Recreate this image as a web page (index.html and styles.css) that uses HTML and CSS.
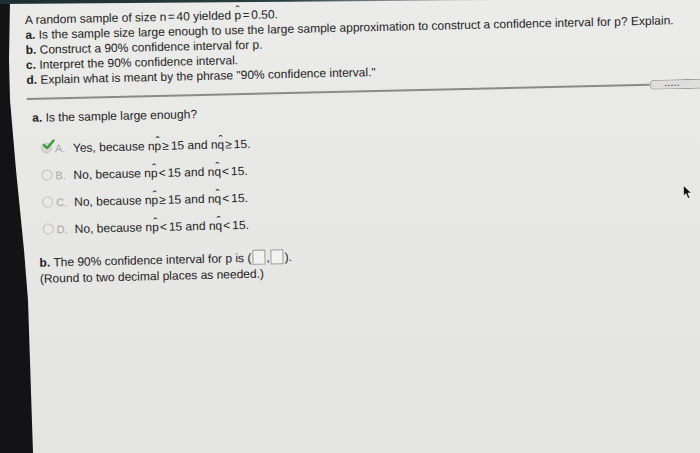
FILE: index.html
```html
<!DOCTYPE html>
<html>
<head>
<meta charset="utf-8">
<link rel="stylesheet" href="styles.css">
</head>
<body>
<div class="page">
  <div class="content">
    <div class="prompt">
      <div class="line">A random sample of size n<span class="eq">=</span>40 yielded <span class="hat">p</span><span class="eq">=</span>0.50.</div>
      <div class="line"><b class="lbl">a.</b> Is the sample size large enough to use the large sample approximation to construct a confidence interval for p? Explain.</div>
      <div class="line"><b class="lbl">b.</b> Construct a 90% confidence interval for p.</div>
      <div class="line"><b class="lbl">c.</b> Interpret the 90% confidence interval.</div>
      <div class="line"><b class="lbl">d.</b> Explain what is meant by the phrase "90% confidence interval."</div>
    </div>
    <div class="rule-row">
      <div class="rule"></div>
      <div class="pill">&bull;&bull;&bull;&bull;&bull;</div>
    </div>
    <div class="question">
      <p class="qa"><b class="lbl">a.</b> Is the sample large enough?</p>
      <ul class="options">
        <li class="opt">
          <span class="radio checked"><svg class="check" viewBox="0 0 12 10" width="12" height="10"><path d="M1 5.5 L4.3 8.5 L11 1" fill="none" stroke="#3f9a3a" stroke-width="2.4" stroke-linecap="round" stroke-linejoin="round"/></svg></span>
          <span class="letter">A.</span>
          <span class="txt">Yes, because n<span class="hat">p</span><span class="rel">&ge;</span>15 and n<span class="hat">q</span><span class="rel">&ge;</span>15.</span>
        </li>
        <li class="opt">
          <span class="radio"></span>
          <span class="letter">B.</span>
          <span class="txt">No, because n<span class="hat">p</span><span class="rel">&lt;</span>15 and n<span class="hat">q</span><span class="rel">&lt;</span>15.</span>
        </li>
        <li class="opt">
          <span class="radio"></span>
          <span class="letter">C.</span>
          <span class="txt">No, because n<span class="hat">p</span><span class="rel">&ge;</span>15 and n<span class="hat">q</span><span class="rel">&lt;</span>15.</span>
        </li>
        <li class="opt">
          <span class="radio"></span>
          <span class="letter">D.</span>
          <span class="txt">No, because n<span class="hat">p</span><span class="rel">&lt;</span>15 and n<span class="hat">q</span><span class="rel">&lt;</span>15.</span>
        </li>
      </ul>
      <div class="part-b">
        <p class="qb"><b class="lbl">b.</b> The 90% confidence interval for p is (<span class="box"></span>,<span class="box"></span>).</p>
        <p class="note">(Round to two decimal places as needed.)</p>
      </div>
    </div>
  </div>
  <div class="bezel-left"></div>
  <div class="bezel-top"></div>
  <svg class="cursor" viewBox="0 0 10 15" width="10" height="15"><path d="M0.5 0.5 L0.5 11 L3 8.6 L5 13.5 L6.8 12.7 L4.9 8 L8.3 8 Z" fill="#111" stroke="#fff" stroke-width="0.6"/></svg>
</div>
</body>
</html>
```

FILE: styles.css
```css
html, body {
  margin: 0;
  padding: 0;
}
body {
  width: 700px;
  height: 453px;
  overflow: hidden;
  background: #e8e8e6;
  font-family: "Liberation Sans", Arial, sans-serif;
  font-size: 12px;
  color: #222;
}
.page {
  position: relative;
  width: 700px;
  height: 453px;
  overflow: hidden;
  background: linear-gradient(180deg, #ebebe9 0%, #e7e7e5 50%, #e4e4e2 100%);
}
.content {
  padding: 13px 0 0 25px;
  transform-origin: 25px 20px;
  transform: rotate(-1.3deg);
  width: 720px;
}
.line {
  line-height: 15px;
  height: 15px;
  white-space: nowrap;
}
.lbl {
  font-weight: bold;
}
.eq {
  margin: 0 1.5px;
}
.rel {
  margin: 0 2px 0 1px;
}
.hat {
  position: relative;
  display: inline-block;
}
.hat::before {
  content: "\02C6";
  position: absolute;
  left: 0;
  right: 0;
  top: -4px;
  text-align: center;
  font-size: 12px;
  line-height: 12px;
}
.rule-row {
  margin-top: 5px;
  height: 12px;
  display: flex;
  align-items: center;
}
.rule {
  width: 623px;
  height: 1.5px;
  background: #8a8a8a;
}
.pill {
  width: 70px;
  height: 10px;
  border: 1px solid #9c9c9c;
  border-right: none;
  border-radius: 6px 0 0 6px;
  background: #dededc;
  font-size: 6px;
  line-height: 10px;
  letter-spacing: 1px;
  color: #666;
  padding-left: 14px;
  box-sizing: border-box;
}
.question {
  padding-left: 5px;
}
.question p {
  margin: 0;
  white-space: nowrap;
}
.qa {
  margin-top: 6px !important;
  line-height: 15px;
}
.options {
  list-style: none;
  margin: 9px 0 0 0;
  padding: 0 0 0 8px;
}
.opt {
  height: 27px;
  display: flex;
  align-items: center;
  white-space: nowrap;
}
.radio {
  position: relative;
  width: 9px;
  height: 9px;
  border: 1px solid #c0c0c0;
  border-radius: 50%;
  background: #e9e9e7;
  flex: none;
}
.radio.checked {
  border-color: #c6c6c6;
  background: #d6d6d4;
}
.check {
  position: absolute;
  left: 1px;
  top: -4px;
}
.letter {
  width: 18px;
  margin-left: 3px;
  color: #a9a9a9;
  font-size: 11px;
  flex: none;
}
.part-b {
  margin-top: 12px;
  padding-left: 4px;
}
.qb {
  line-height: 16px;
}
.note {
  line-height: 16px;
}
.box {
  display: inline-block;
  width: 11px;
  height: 13px;
  border: 1px solid #9a9a9a;
  background: #f2f2f0;
  vertical-align: -3px;
  margin: 0 1px;
}
.bezel-left {
  position: absolute;
  left: 0;
  top: 0;
  width: 40px;
  height: 453px;
  background: #131316;
  clip-path: polygon(0 0, 10px 0, 9px 60px, 10px 100px, 16px 170px, 24px 250px, 28px 300px, 33px 453px, 0 453px);
}
.bezel-top {
  position: absolute;
  left: 0;
  top: 0;
  width: 520px;
  height: 4px;
  background: linear-gradient(90deg, #1d2e33 0%, #2a3f44 55%, rgba(60, 80, 85, 0) 100%);
  clip-path: polygon(0 0, 100% 0, 0 100%);
}
.cursor {
  position: absolute;
  left: 683px;
  top: 185px;
}
```
